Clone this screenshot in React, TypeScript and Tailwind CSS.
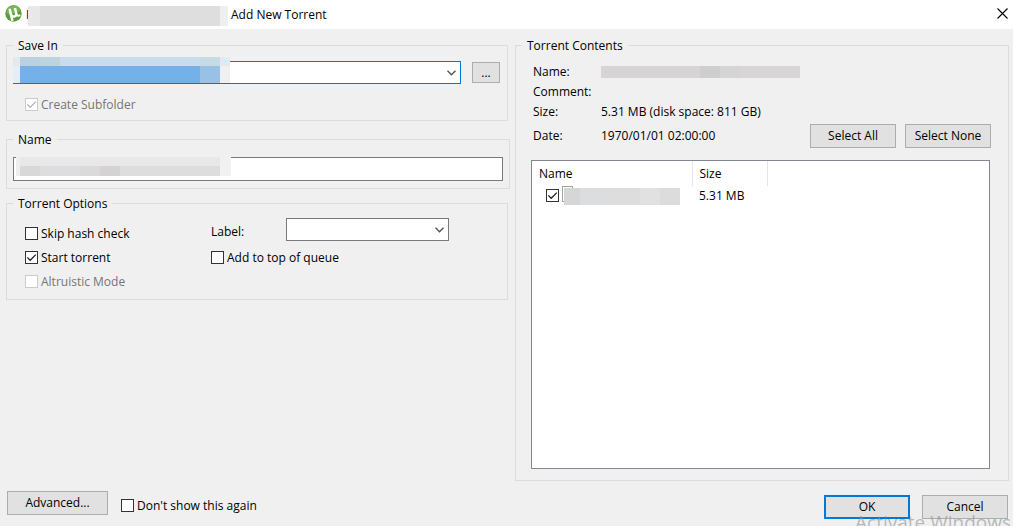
import { useState, type ReactNode } from "react";

function Group({ title, className = "", children }: { title: string; className?: string; children: ReactNode }) {
  return (
    <fieldset className={`min-w-0 border border-[#dcdcdc] ${className}`}>
      <legend className="ml-1.5 h-4 px-[5px] leading-[18px]">{title}</legend>
      {children}
    </fieldset>
  );
}

function Tick({ label, checked = false, disabled = false, hideLabel = false }: { label: string; checked?: boolean; disabled?: boolean; hideLabel?: boolean }) {
  const [on, setOn] = useState(checked);
  return (
    <label className={`flex h-4 w-fit items-start gap-[3px] whitespace-nowrap ${disabled ? "text-[#757575]" : ""}`}>
      <span className="relative mt-px size-[13px] shrink-0">
        <input
          type="checkbox"
          checked={on}
          disabled={disabled}
          aria-label={label}
          onChange={(e) => setOn(e.target.checked)}
          className="block size-[13px] appearance-none border border-[#333] bg-white disabled:border-[#ccc]"
        />
        {on && (
          <svg viewBox="0 0 13 13" className={`pointer-events-none absolute inset-0 ${disabled ? "text-[#b4b4b4]" : "text-[#222]"}`} fill="none" stroke="currentColor" strokeWidth="1.3">
            <path d="M2.3 6.4 5.2 9.3 10.8 3.6" />
          </svg>
        )}
      </span>
      {!hideLabel && <span>{label}</span>}
    </label>
  );
}

function Button({ children, className }: { children: ReactNode; className: string }) {
  return (
    <button type="button" className={`flex items-center justify-center whitespace-nowrap bg-[#e1e1e1] ${className}`}>
      {children}
    </button>
  );
}

function Combo({ id, label, className }: { id: string; label?: string; className: string }) {
  return (
    <>
      <select id={id} aria-label={label} className={`block h-[23px] w-full appearance-none border bg-white ${className}`}>
        <option value=""></option>
      </select>
      <svg viewBox="0 0 9 6" className="pointer-events-none absolute top-[9px] right-[5px] h-1.5 w-[9px]" fill="none" stroke="#555" strokeWidth="1.4">
        <path d="M.5.7 4.5 4.7 8.5.7" />
      </svg>
    </>
  );
}

function Logo() {
  return (
    <svg viewBox="0 0 17 17" className="size-[17px] shrink-0">
      <circle cx="8.5" cy="8.5" r="8.2" fill="#5a9a37" />
      <path d="M1.2 5A8.2 8.2 0 0 1 15.8 5L12 8 2 9Z" fill="#77b255" />
      <g fill="none" stroke="#fff" strokeWidth="2.5">
        <path d="M4.6 3.8 7.4 15.8" />
        <path d="M5.6 8.2C6.2 11 8 12 9.800 11.400C11.400 10.900 11.500 9.600 11.200 8.400L9.900 3" />
        <path d="M11.200 8.800C11.600 10.800 13 11.200 15.400 10.200" strokeWidth="2" />
      </g>
    </svg>
  );
}

export default function App() {
  return (
    <div className="relative flex min-h-screen flex-col overflow-hidden bg-[#f0f0f0] font-['Open_Sans','Noto_Sans',sans-serif] text-[12px] leading-4 text-black">
      <header className="flex h-[29px] items-center bg-white pr-[5px] pl-[5px]">
        <div className="mb-[3px]">
          <Logo />
        </div>
        <h1 className="flex items-center pl-1">
          <span className="w-0.5 overflow-hidden">I</span>
          <span className="mt-[3px] flex h-5" aria-hidden="true">
            <span className="w-3 bg-[#e8e8e8]" />
            <span className="w-[180px] bg-[#dedede]" />
            <span className="w-2 bg-[#efefef]" />
          </span>
          <span className="pl-[3px]">Add New Torrent</span>
        </h1>
        <button type="button" aria-label="Close" className="mb-0.5 ml-auto">
          <svg viewBox="0 0 11 11" className="size-[11px]" stroke="#000" strokeWidth="1.1">
            <path d="M.5.5 10.5 10.5M10.5.5.5 10.5" />
          </svg>
        </button>
      </header>

      <main className="grid flex-1 grid-cols-[502fr_494fr] gap-[7px] pt-2 pr-1 pl-1.5">
        <div className="flex min-w-0 flex-col">
          <Group title="Save In" className="mb-2.5 pb-[7px]">
            <div className="flex items-center gap-[11px] pt-2 pr-[7px] pl-1.5">
              <div className="relative min-w-0 flex-1">
                <Combo id="save-in" label="Save In" className="border-[#0078d7]" />
                <div className="pointer-events-none absolute -top-1 left-0 w-[217px]" aria-hidden="true">
                  <div className="flex h-[9px]">
                    <span className="w-[7px] bg-[#e2eaee]" />
                    <span className="w-[21px] bg-[#bbd0e1]" />
                    <span className="w-[19px] bg-[#bed3e0]" />
                    <span className="w-[140px] bg-[#c8dcee]" />
                    <span className="w-5 bg-[#c5dce6]" />
                    <span className="flex-1 bg-[#e2eaef]" />
                  </div>
                  <div className="flex h-[17px]">
                    <span className="w-[7px] bg-[#e4eff5]" />
                    <span className="w-[180px] bg-[#74b1e8]" />
                    <span className="w-5 bg-[#98c1e5]" />
                    <span className="flex-1 bg-[#f0f0f0]" />
                  </div>
                </div>
              </div>
              <Button className="h-[21px] w-7 border border-[#adadad]">...</Button>
            </div>
            <div className="pt-[13px] pl-[18px]">
              <Tick label="Create Subfolder" checked disabled />
            </div>
          </Group>

          <Group title="Name" className="-mr-0.5 mb-1.5 pb-[7px]">
            <div className="relative mt-2.5 mr-1.5 ml-1.5">
              <input type="text" aria-label="Name" className="block h-6 w-full border border-[#7a7a7a] bg-white px-1" />
              <div className="pointer-events-none absolute top-0 left-[3px] flex h-[19px] w-[215px]" aria-hidden="true">
                <span className="w-1 bg-[#eeeeee]" />
                <span className="flex w-[200px] flex-col">
                  <span className="h-[9px] bg-[#e8e8e8]" />
                  <span className="flex flex-1">
                    <span className="w-5 bg-[#d8d8d8]" />
                    <span className="w-10 bg-[#dddddf]" />
                    <span className="w-5 bg-[#dadada]" />
                    <span className="w-5 bg-[#d5d2d3]" />
                    <span className="flex-1 bg-[#dddddd]" />
                  </span>
                </span>
                <span className="flex-1 bg-[#f1f1f1]" />
              </div>
            </div>
          </Group>

          <Group title="Torrent Options" className="pb-[9px]">
            <div className="flex pl-[18px]">
              <div className="flex w-[186px] flex-col gap-2 pt-[15px]">
                <Tick label="Skip hash check" />
                <Tick label="Start torrent" checked />
                <Tick label="Altruistic Mode" disabled />
              </div>
              <div className="flex flex-col gap-[9px] pt-[7px]">
                <div className="flex h-[23px]">
                  <label htmlFor="torrent-label" className="w-[75px] pt-1.5">Label:</label>
                  <div className="relative w-[163px]">
                    <Combo id="torrent-label" className="border-[#7a7a7a]" />
                  </div>
                </div>
                <Tick label="Add to top of queue" />
              </div>
            </div>
          </Group>
        </div>

        <Group title="Torrent Contents" className="flex flex-col pb-[11px]">
          <div className="flex h-full flex-col pr-[17px] pl-[15px]">
            <dl className="grid grid-cols-[68px_1fr] items-center pt-[9px] pl-0.5 leading-5">
              <dt>Name:</dt>
              <dd className="flex h-3" aria-hidden="true">
                <span className="w-[99px] bg-[#d6d4d5]" />
                <span className="w-5 bg-[#cfcecf]" />
                <span className="w-5 bg-[#d5d5d5]" />
                <span className="w-[60px] bg-[#d7d5d6]" />
              </dd>
              <dt>Comment:</dt>
              <dd />
              <dt>Size:</dt>
              <dd>5.31 MB (disk space: 811 GB)</dd>
              <dt className="pt-0.5">Date:</dt>
              <dd className="flex items-center gap-[9px] pt-0.5">
                <span className="flex-1">1970/01/01 02:00:00</span>
                <Button className="h-6 w-[86px] border border-[#adadad]">Select All</Button>
                <Button className="h-6 w-[86px] border border-[#adadad]">Select None</Button>
              </dd>
            </dl>
            <div className="mt-3 mr-px flex-1 border border-[#828790] bg-white">
              <table className="w-full table-fixed border-collapse text-left">
                <colgroup>
                  <col className="w-[160px]" />
                  <col className="w-[75px]" />
                  <col />
                </colgroup>
                <thead>
                  <tr className="h-[25px]">
                    <th className="border-r border-[#e5e5e5] pl-[7px] font-normal">Name</th>
                    <th className="border-r border-[#e5e5e5] pl-[7px] font-normal">Size</th>
                    <td />
                  </tr>
                </thead>
                <tbody>
                  <tr>
                    <td className="pl-3.5">
                      <div className="flex h-5 items-center gap-[3px]">
                        <Tick label="Include file" checked hideLabel />
                        <span className="flex h-[17px]" aria-hidden="true">
                          <span className="-mt-0.5 h-4 w-[11px] shrink-0 border border-[#9aa79c] bg-white" />
                          <span className="-ml-[9px] w-4 bg-[#d6d6d6]" />
                          <span className="w-5 bg-[#dcdddf]" />
                          <span className="w-10 bg-[#dddddd]" />
                          <span className="w-5 bg-[#e1e1e1]" />
                          <span className="w-5 bg-[#dcdcdc]" />
                        </span>
                      </div>
                    </td>
                    <td className="pl-[7px]">5.31 MB</td>
                    <td />
                  </tr>
                </tbody>
              </table>
            </div>
          </div>
        </Group>
      </main>

      <footer className="flex h-[45px] items-start pr-[5px] pl-[7px]">
        <Button className="mt-2.5 h-6 w-[101px] border border-[#adadad]">Advanced...</Button>
        <div className="mt-[17px] ml-[13px]">
          <Tick label="Don't show this again" />
        </div>
        <div className="mt-3.5 ml-auto flex gap-3">
          <Button className="h-6 w-[86px] border-2 border-[#0078d7]">OK</Button>
          <Button className="h-6 w-[86px] border border-[#adadad]">Cancel</Button>
        </div>
      </footer>
      <p className="pointer-events-none absolute right-0.5 -bottom-2 text-[19px] leading-6 whitespace-nowrap text-[#909090]/60">Activate Windows</p>
    </div>
  );
}
